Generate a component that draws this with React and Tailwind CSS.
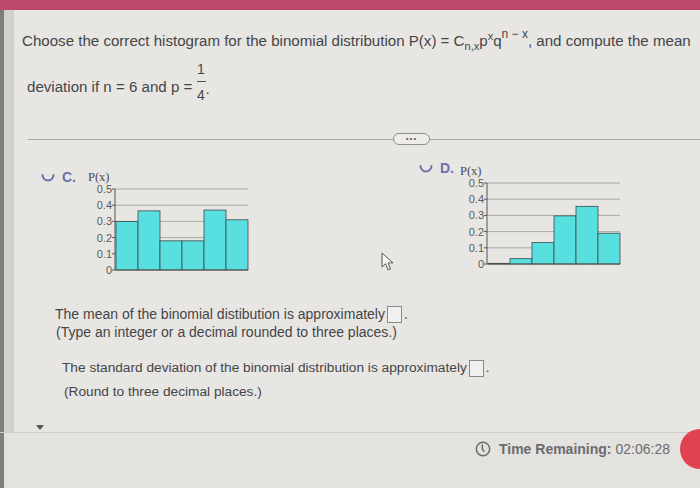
import React from 'react'

const cData = [0.3, 0.365, 0.18, 0.18, 0.37, 0.31]
const dData = [0.004, 0.033, 0.132, 0.297, 0.356, 0.19]

function Histogram({ data }) {
  const axisX = 31
  const y0 = 100
  const unit = 162 // px per 1.0
  const barW = 22
  const ticks = [0, 0.1, 0.2, 0.3, 0.4, 0.5]
  return (
    <svg width="172" height="108" viewBox="0 0 172 108" className="block">
      <text x="4" y="11" fontFamily="Liberation Serif, serif" fontSize="12.5" fill="#4b4b4d">P(x)</text>
      {ticks.slice(1).map(t => (
        <line key={t} x1={axisX} x2="164" y1={y0 - t * unit} y2={y0 - t * unit} stroke="#a9a9a9" strokeWidth="1" />
      ))}
      {data.map((v, i) => (
        <rect
          key={i}
          x={axisX + 1 + i * barW}
          y={y0 - v * unit}
          width={barW}
          height={v * unit}
          fill="#58dfe0"
          stroke="#3d4a4b"
          strokeWidth="0.8"
        />
      ))}
      <line x1={axisX} x2={axisX} y1={y0 - 0.5 * unit} y2={y0} stroke="#555" strokeWidth="1" />
      <line x1={axisX} x2={axisX + 1 + data.length * barW} y1={y0} y2={y0} stroke="#555" strokeWidth="1" />
      {ticks.map(t => (
        <g key={t}>
          <line x1={axisX - 3} x2={axisX} y1={y0 - t * unit} y2={y0 - t * unit} stroke="#555" strokeWidth="1" />
          <text
            x={axisX - 3}
            y={y0 - t * unit + 4}
            textAnchor="end"
            fontFamily="Liberation Sans, Arial, sans-serif"
            fontSize="11"
            fill="#5a5a5c"
          >
            {t === 0 ? '0' : t.toFixed(1)}
          </text>
        </g>
      ))}
    </svg>
  )
}

function Radio() {
  return (
    <svg width="16" height="16" viewBox="0 0 16 16" className="block">
      <path d="M2.5 6 A5.5 5.5 0 0 0 13.5 6" fill="none" stroke="#6c70ab" strokeWidth="2" strokeLinecap="round" />
    </svg>
  )
}

function AnswerBox() {
  return <span className="inline-block w-[15px] h-[17px] border border-[#8a8a8a] bg-white/40 align-middle mx-[2px]" />
}

export default function App() {
  return (
    <div className="w-[700px] h-[488px] relative overflow-hidden bg-[#e7e6e3] text-[#454547] font-['Liberation_Sans',Arial,sans-serif]">
      <div className="h-[10px] bg-[#bb4a6d]" />

      <div className="flex h-[422px]">
        <div className="w-[4px] bg-[#807e7a]" />
        <div className="w-[10px] bg-[#d2d1cd]" />

        <div className="flex-1 flex flex-col">
          <div className="mt-[16px] ml-[8px] h-[20px] text-[15.1px] leading-[20px] whitespace-nowrap">
            Choose the correct histogram for the binomial distribution P(x) = C
            <span className="text-[11px] align-sub">n,x</span>p
            <span className="text-[11px] align-super">x</span>q
            <span className="text-[12px] relative -top-[8px]">n − x</span>, and compute the mean
          </div>
          <div className="mt-[16px] ml-[13px] h-[50px] flex items-center text-[15.1px] whitespace-nowrap">
            <span>deviation if n = 6 and p =&nbsp;</span>
            <span className="inline-flex flex-col items-center text-[14px] mb-[10px]">
              <span className="leading-[14px]">1</span>
              <span className="mt-[5px] w-[9px] h-px bg-[#555]" />
              <span className="mt-[6px] leading-[14px]">4</span>
            </span>
            <span className="mt-[4px]">.</span>
          </div>

          <div className="mt-[27px] ml-[14px] relative h-px bg-[#a8a7a4]">
            <div className="absolute left-[365px] -top-[6px] w-[37px] h-[12px] rounded-full border border-[#8e8e8e] bg-[#eeede9] flex items-center justify-center text-[8px] leading-none text-[#666] tracking-[1px]">
              •••
            </div>
          </div>

          <div className="mt-[26px] flex items-start">
            <div className="ml-[26px] flex items-start">
              <div className="mt-[3px]">
                <Radio />
              </div>
              <span className="ml-[6px] mt-[1px] text-[14px] font-bold text-[#6c70ab]">C.</span>
              <div className="ml-[8px] mt-[4px]">
                <Histogram data={cData} />
              </div>
            </div>
            <div className="ml-[162px] flex items-start">
              <div className="-mt-[6px]">
                <Radio />
              </div>
              <span className="ml-[6px] -mt-[8px] text-[14px] font-bold text-[#6c70ab]">D.</span>
              <div className="ml-[2px] -mt-[2px]">
                <Histogram data={dData} />
              </div>
            </div>
          </div>

          <div className="mt-[27px] ml-[41px] text-[14px] leading-[18px] whitespace-nowrap">
            <div className="flex items-center">
              The mean of the binomial distibution is approximately <AnswerBox />.
            </div>
            <div className="ml-[1px]">(Type an integer or a decimal rounded to three places.)</div>
          </div>
          <div className="mt-[18px] ml-[48px] text-[13.7px] leading-[18px] whitespace-nowrap">
            <div className="flex items-center">
              The standard deviation of the binomial distribution is approximately <AnswerBox />.
            </div>
            <div className="mt-[6px] ml-[2px]">(Round to three decimal places.)</div>
          </div>

          <div className="mt-auto mb-[2px] ml-[22px] w-0 h-0 border-l-[4px] border-r-[4px] border-t-[5px] border-l-transparent border-r-transparent border-t-[#555]" />
        </div>
      </div>

      <div className="h-[56px] flex border-t border-[#cfcecb] bg-[#e3e2df]">
        <div className="w-[4px] bg-[#807e7a]" />
        <div className="flex-1 flex items-start justify-end pt-[7px] pr-[30px] text-[14px] leading-[18px] text-[#6b6b6d]">
          <svg width="16" height="16" viewBox="0 0 24 24" fill="none" stroke="#6b6b6d" strokeWidth="2.2" strokeLinecap="round" className="mr-[8px] mt-[1px]">
            <circle cx="12" cy="12" r="10" />
            <path d="M11 6v6l2.5 3.5" />
          </svg>
          <span className="font-bold">Time Remaining:</span>
          <span className="ml-[4px]">02:06:28</span>
        </div>
      </div>

      <div className="absolute left-[680px] top-[429px] w-[46px] h-[40px] rounded-full bg-[#e2424f]" />

      <svg className="absolute left-[381px] top-[252px]" width="16" height="20" viewBox="0 0 16 20">
        <path d="M1 1 L1 15 L4.5 11.8 L7.2 18 L9.6 17 L7 10.9 L12 10.9 Z" fill="#f4f4f2" stroke="#555" strokeWidth="1" strokeLinejoin="round" />
      </svg>
    </div>
  )
}
